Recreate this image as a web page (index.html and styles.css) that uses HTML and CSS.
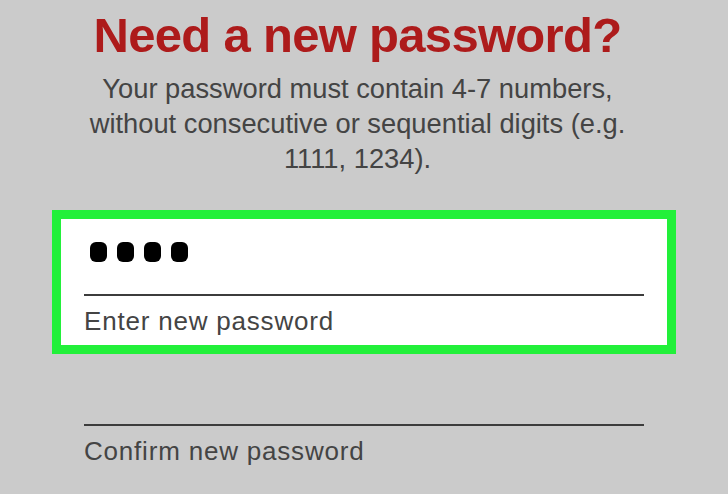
FILE: index.html
```html
<!doctype html>
<html>
<head>
	<title>New password</title>
	<meta name="viewport" content="width=device-width, initial-scale=1">
	<link rel="stylesheet" href="styles.css">
</head>
<body>
	<main class="screen">
		<h1 class="title">Need a new password?</h1>
		<p class="hint">Your password must contain 4-7 numbers, without consecutive or sequential digits (e.g. 1111, 1234).</p>

		<div class="highlight">
			<div class="field">
				<div class="value">
					<span class="dot"></span>
					<span class="dot"></span>
					<span class="dot"></span>
					<span class="dot"></span>
				</div>
				<div class="line"></div>
				<div class="label">Enter new password</div>
			</div>
		</div>

		<div class="field confirm">
			<div class="value"></div>
			<div class="line"></div>
			<div class="label">Confirm new password</div>
		</div>
	</main>
</body>
</html>
```

FILE: styles.css
```css
* {
	box-sizing: border-box;
}
html, body {
	height: 100%;
}
body {
	margin: 0;
	background: #cbcbcb;
	font-family: 'Liberation Sans', Arial, sans-serif;
	overflow: hidden;
}
.screen {
	display: flex;
	flex-direction: column;
	align-items: center;
}
.title {
	margin: 7px 13px 0 0;
	font-size: 49px;
	line-height: 56px;
	letter-spacing: -0.7px;
	font-weight: bold;
	color: #ad1b1b;
	text-align: center;
}
.hint {
	margin: 8px 13px 0 0;
	width: 570px;
	font-size: 27.3px;
	line-height: 35px;
	color: #444;
	text-align: center;
}
.highlight {
	margin-top: 34px;
	width: 624px;
	border: 9px solid #22f03a;
	background: #fff;
	padding: 23px 0 10px;
}
.field {
	width: 560px;
	margin: 0 auto;
}
.value {
	display: flex;
	gap: 10px;
	height: 20px;
	margin-bottom: 32px;
	padding-left: 6px;
}
.dot {
	width: 17px;
	height: 20px;
	border-radius: 6px;
	background: #000;
}
.line {
	height: 2px;
	background: #3c3c3c;
}
.label {
	margin-top: 11px;
	font-size: 26px;
	line-height: 28px;
	letter-spacing: 0.8px;
	color: #444;
}
.confirm {
	margin-top: 18px;
}
```
